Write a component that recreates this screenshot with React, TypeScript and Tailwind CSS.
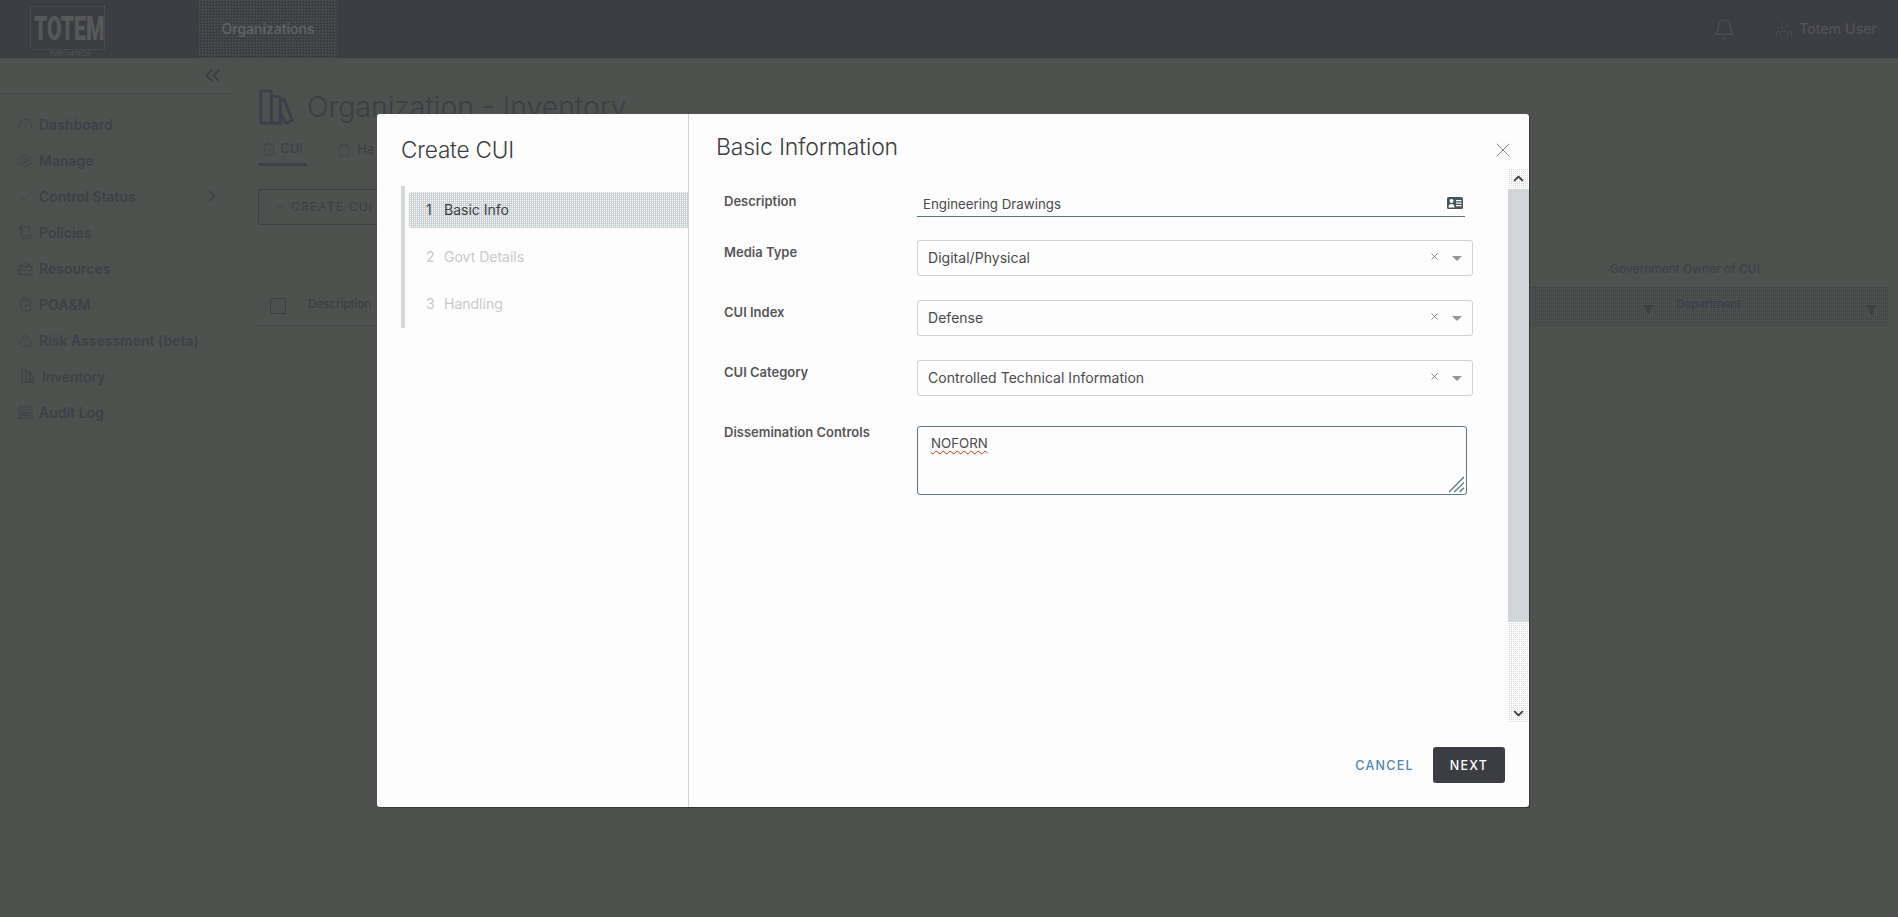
import { Bell, Check, ChevronDown, ChevronRight, ChevronUp, ChevronsLeft, ClipboardCheck, Gauge, Plus, Scroll, Settings, TriangleAlert, X } from "lucide-react";
import type { ReactNode } from "react";

const Books = ({ className }: { className: string }) => (
  <svg viewBox="0 0 37 38" fill="none" stroke="currentColor" strokeWidth="3" className={className}>
    <rect x="2" y="2" width="11" height="34" rx="1.5" />
    <path d="M13 8h8a1.5 1.5 0 0 1 1.5 1.5V36H13" />
    <path d="M22.5 13l4-2 8.500 22-7 3-5.500-11" />
  </svg>
);

const ResourcesIcon = () => (
  <svg viewBox="0 0 16 16" fill="none" stroke="currentColor" strokeWidth="1" className="w-[15px] h-[15px]">
    <path d="M1 6h14v8.500H1z" />
    <path d="M3 6V3l2 1 3-2.500 3 2.500 2-1v3" />
    <path d="M1 10.500l3-2 3 2 2-1.500 2 1.500 4-2" />
  </svg>
);

const AuditIcon = () => (
  <svg viewBox="0 0 16 16" fill="none" stroke="currentColor" strokeWidth="1" className="w-[15px] h-[15px]">
    <rect x="1" y="2" width="14" height="12" />
    <path d="M1 5h14" strokeDasharray="1 1" />
    <path d="M3.500 7.500h2v4h-2zM7 7.500h2v4H7zM10.500 7.500h2v4h-2z" />
  </svg>
);

const FilterIcon = () => (
  <svg viewBox="0 0 12 12" className="w-[11px] h-[11px] fill-[#3c3e44]">
    <path d="M0 1h12L7.500 6.500V11h-3V6.500z" />
  </svg>
);

const navItems: { label: string; icon: ReactNode; textClass?: string; more?: boolean }[] = [
  { label: "Dashboard", icon: <Gauge size={15} strokeWidth={1.4} /> },
  { label: "Manage", icon: <Settings size={15} strokeWidth={1.4} /> },
  { label: "Control Status", icon: <Check size={15} strokeWidth={1.4} />, more: true },
  { label: "Policies", icon: <Scroll size={15} strokeWidth={1.4} /> },
  { label: "Resources", icon: <ResourcesIcon /> },
  { label: "POA&M", icon: <ClipboardCheck size={15} strokeWidth={1.4} /> },
  { label: "Risk Assessment (beta)", icon: <TriangleAlert size={15} strokeWidth={1.4} /> },
  { label: "Inventory", icon: <Books className="w-[14px] h-[16px] ml-[3px]" />, textClass: "ml-[3px] font-medium" },
  { label: "Audit Log", icon: <AuditIcon /> },
];

const Sidebar = () => (
  <aside className="w-[232px] shrink-0">
    <div className="h-[36px] flex items-center justify-end pr-[7px] border-b border-dotted border-[#3f4146] text-[#3c3e48]">
      <ChevronsLeft size={25} strokeWidth={1.8} />
    </div>
    <ul className="mt-[12px] text-[14px] text-[#3e4048] font-semibold">
      {navItems.map((item) => (
        <li key={item.label} className="h-[36px] flex items-center pl-[18px] pr-[9px]">
          <span className="w-[21px] shrink-0 flex">{item.icon}</span>
          <span className={item.textClass}>{item.label}</span>
          {item.more && <ChevronRight size={22} strokeWidth={1.8} className="ml-auto" />}
        </li>
      ))}
    </ul>
  </aside>
);

const Field = ({ label, labelClass, className, children }: { label: string; labelClass: string; className: string; children: ReactNode }) => (
  <div className={`grid grid-cols-[193px_1fr] ${className}`}>
    <label className={`text-[13px] leading-5 font-semibold text-[#565656] ${labelClass}`}>{label}</label>
    {children}
  </div>
);

const SelectBox = ({ value }: { value: string }) => (
  <div className="h-[36px] w-[556px] border border-[#ccd2d5] rounded-[3px] flex items-center pl-[10px] text-[14px] text-[#4a4a4a]">
    <span className="-mt-[2px] tracking-[0.03px]">{value}</span>
    <X size={11} strokeWidth={1.8} className="ml-auto text-[#777] -mt-[3px]" />
    <span className="ml-[12px] mr-[10px] w-0 h-0 border-x-[5px] border-x-transparent border-t-[5px] border-t-[#949494]" />
  </div>
);

const Modal = () => (
  <div className="absolute left-[377px] top-[114px] w-[1152px] h-[693px] bg-[#fdfdfd] rounded-[3px] shadow-[1px_1px_0_#37383c] flex">
    <div className="w-[312px] shrink-0 border-r border-[#cfd4d7] pl-[24px]">
      <h2 className="mt-[21px] text-[22.600px] leading-[30px] font-light text-[#3c3d42] tracking-[-0.2px]">Create CUI</h2>
      <div className="mt-[21px] border-l-4 border-[#d5d7d8] py-[6px] pl-[4px] h-[142px] text-[14px]">
        <div className="h-[36px] flex items-center rounded-l-[3px] pl-[17px] pb-[2px] text-[#3c3d42] bg-[conic-gradient(#fff_25%,#cdd2d5_0)] bg-[length:2px_2px]">
          <span className="w-[18px]">1</span>Basic Info
        </div>
        <div className="mt-[11px] h-[36px] flex items-center pl-[17px] pb-[2px] text-[#c9c9c9]">
          <span className="w-[18px]">2</span>Govt Details
        </div>
        <div className="mt-[11px] h-[36px] flex items-center pl-[17px] pb-[2px] text-[#c9c9c9]">
          <span className="w-[18px]">3</span>Handling
        </div>
      </div>
    </div>
    <div className="flex-1 min-w-0 flex flex-col relative">
      <X size={24} strokeWidth={0.8} className="absolute right-[14px] top-[24px] text-[#6b6b6b]" />
      <h3 className="pl-[27px] mt-[18px] h-[37px] text-[23px] leading-[30px] font-light text-[#3c3d42] tracking-[-0.2px]">Basic Information</h3>
      <div className="flex flex-1 min-h-0">
        <div className="flex-1 min-w-0 pl-[35px]">
          <Field label="Description" labelClass="" className="mt-[22px]">
            <div className="h-[26px] w-[548px] border-b border-[#5f7583] flex items-center pl-[6px] pr-[2px] text-[13.3px] text-[#4a4a4a]">
              <span className="mt-[2px]">Engineering Drawings</span>
              <svg viewBox="0 0 16 12" className="ml-auto w-[16px] h-[12px] -mt-[1px]">
                <rect width="16" height="12" rx="1.500" fill="#46565f" />
                <circle cx="4.500" cy="4" r="2" fill="#fff" />
                <path d="M1.500 10.500c0-2.500 1-3.500 3-3.500s3 1 3 3.500zM9 3h5.500v1.200H9zM9 5.500h5.500v1.200H9zM9 8h5.500v1.200H9z" fill="#fff" />
              </svg>
            </div>
          </Field>
          <Field label="Media Type" labelClass="pt-[2px]" className="mt-[23px]">
            <SelectBox value="Digital/Physical" />
          </Field>
          <Field label="CUI Index" labelClass="pt-[2px]" className="mt-[24px]">
            <SelectBox value="Defense" />
          </Field>
          <Field label="CUI Category" labelClass="pt-[2px]" className="mt-[24px]">
            <SelectBox value="Controlled Technical Information" />
          </Field>
          <Field label="Dissemination Controls" labelClass="-mt-[4px]" className="mt-[30px]">
            <div className="relative h-[69px] w-[550px] border border-[#5f7583] rounded-[3px] pl-[13px] pt-[6px] text-[13.300px] leading-5 text-[#4a4a4a]">
              <span className="underline decoration-wavy decoration-[#c23a14] decoration-1 underline-offset-2">NOFORN</span>
              <svg viewBox="0 0 16 16" className="absolute right-[1px] bottom-[1px] w-[17px] h-[17px] stroke-[#5f7583]" strokeWidth="1.2">
                <path d="M1 15L15 1M6 15L15 6M11 15l4-4" />
              </svg>
            </div>
          </Field>
        </div>
        <div className="w-[21px] shrink-0 flex flex-col bg-[conic-gradient(#d8d8d8_25%,#fdfdfd_0)] bg-[length:2px_2px]">
          <div className="h-[20px] pb-[2px] flex items-center justify-center text-[#3c3d42]">
            <ChevronUp size={15} strokeWidth={3} />
          </div>
          <div className="h-[433px] bg-[#d0d5d8]" />
          <div className="mt-auto h-[18px] pb-[2px] flex items-center justify-center text-[#3c3d42]">
            <ChevronDown size={15} strokeWidth={3} />
          </div>
        </div>
      </div>
      <div className="h-[84px] shrink-0 flex items-start justify-end pt-[24px] pr-[24px] text-[12.500px] font-medium tracking-[1.3px]">
        <button className="h-[36px] pt-[2px] text-[#4f86ae] mr-[19px]">CANCEL</button>
        <button className="h-[36px] pt-[2px] w-[72px] rounded-[3px] bg-[#3c3d42] text-white">NEXT</button>
      </div>
    </div>
  </div>
);

export default function App() {
  return (
    <div className="relative w-[1898px] h-[917px] overflow-hidden bg-[#4f514f] font-['Inter',sans-serif]">
      <header className="h-[58px] bg-[#3c3d43] flex items-center text-[#626564]">
        <div className="w-[198px] shrink-0 pl-[30px] pt-[6px] self-start">
          <div className="w-[75px] h-[44px] border border-dotted border-[#54575a] flex items-center overflow-hidden pl-[3px]">
            <span className="font-['Roboto',sans-serif] font-black text-[33px] leading-none origin-left scale-x-[0.64] inline-block text-[#565958]">TOTEM</span>
          </div>
          <div className="ml-[20px] text-[6px] leading-[8px] text-[#54575a]">FORTU4TECH</div>
        </div>
        <div className="h-full w-[140px] flex items-center justify-center pb-[2px] text-[14px] font-medium bg-[conic-gradient(#4a4c4e_25%,#3c3d43_0)] bg-[length:3px_3px]">
          Organizations
        </div>
        <div className="ml-auto flex items-center pr-[21px] text-[#55565b] text-[14.300px]">
          <Bell size={23} strokeWidth={1} />
          <span className="ml-[37px] flex items-center gap-[4px]">
            <svg viewBox="0 0 20 16" fill="none" stroke="currentColor" strokeWidth="1" strokeDasharray="1.500 1" className="w-[22px] h-[16px]">
              <circle cx="10" cy="5" r="3" />
              <path d="M2 15v-2c0-2 2-3 4-3M18 15v-2c0-2-2-3-4-3M6 15v-2c0-2 2-3 4-3s4 1 4 3v2" />
            </svg>
            Totem User
          </span>
        </div>
      </header>
      <div className="flex">
        <Sidebar />
        <main className="flex-1 min-w-0 pl-[26px] pr-[9px] text-[#3c3e48]">
          <div className="mt-[31px] h-[36px] flex items-center">
            <Books className="w-[37px] h-[36px]" />
            <h1 className="ml-[12px] text-[28.400px] leading-none font-light">Organization - Inventory</h1>
          </div>
          <div className="mt-[9px] h-[32px] flex items-center text-[13px]">
            <span className="h-[32px] w-[49px] pt-[1px] flex items-center justify-center gap-[4px] border-b-[3px] border-[#3c3e48]">
              <ClipboardCheck size={14} strokeWidth={1} />
              CUI
            </span>
            <span className="ml-[30px] flex items-center gap-[6px]">
              <ClipboardCheck size={14} strokeWidth={1} className="shrink-0" />
              Ha
            </span>
          </div>
          <button className="mt-[23px] h-[36px] w-[150px] rounded-[3px] border border-[#3c3e48] flex items-center pl-[14px] gap-[4px] text-[12px] tracking-[1.2px]">
            <Plus size={14} strokeWidth={1} />
            CREATE CUI
          </button>
          <div className="mt-[35px] h-[27px] pl-[1352px] text-[12px] leading-[18px]">Government Owner of CUI</div>
          <div className="h-[39px] flex text-[11.500px] font-medium">
            <div className="w-[300px] flex items-center border-b border-dotted border-[#3f4146]">
              <span className="ml-[12px] w-[16px] h-[16px] border border-[#3c3e48] rounded-[2px]" />
              <span className="ml-[22px] -mt-[2px]">Description</span>
            </div>
            <div className="flex-1 flex items-center bg-[conic-gradient(#3f4146_25%,#4f514f_0)] bg-[length:2px_2px]">
              <span className="ml-auto mr-[-2px] mt-[5px]"><FilterIcon /></span>
              <span className="ml-[24px] w-[190px] -mt-[4px]">Department</span>
              <span className="mr-[12px] mt-[5px]"><FilterIcon /></span>
            </div>
          </div>
        </main>
      </div>
      <Modal />
    </div>
  );
}
